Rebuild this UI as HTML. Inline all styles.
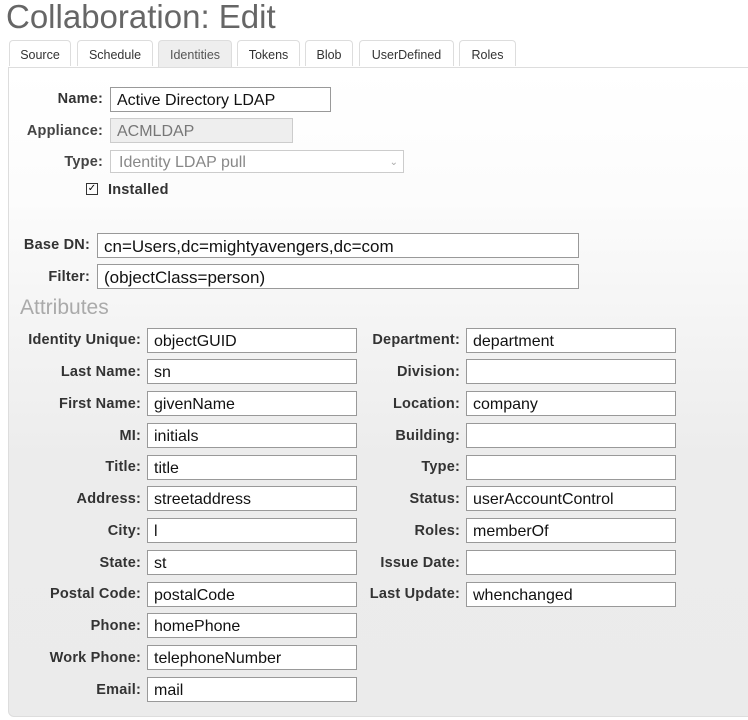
<!DOCTYPE html>
<html><head><style>
body{margin:0;width:748px;height:720px;background:#fff;position:relative;overflow:hidden;font-family:"Liberation Sans",Arial,sans-serif}
.t{position:absolute;left:6px;top:-2px;font-size:33px;color:#666}
.tab{position:absolute;top:40px;height:26px;border:1px solid #ddd;border-bottom:none;border-radius:4px 4px 0 0;background:#fff;font-size:12.5px;color:#333;text-align:center;line-height:28px;box-sizing:border-box}
.panel{position:absolute;left:8px;top:67px;width:750px;height:650px;border:1px solid #ddd;border-radius:0 0 0 6px;background:linear-gradient(#fff 0%,#fcfcfc 20%,#ececec 60%,#ebebeb 100%);box-sizing:border-box}
.l{position:absolute;font-weight:bold;font-size:14.5px;color:#333;text-align:right;letter-spacing:0.2px}
.i{position:absolute;height:25px;background:#fff;border:1px solid #999;box-sizing:border-box;font-size:16px;color:#111;padding-left:6px;line-height:25px;white-space:nowrap}
.h{position:absolute;left:20px;top:296px;font-size:21px;color:#aaa}
</style></head><body>
<div class="t">Collaboration: Edit</div>
<div class="panel"></div>
<div class="tab" style="left:9px;width:62px">Source</div>
<div class="tab" style="left:77px;width:76px">Schedule</div>
<div class="tab" style="left:158px;width:74px;background:#eee;color:#555;height:27px">Identities</div>
<div class="tab" style="left:237px;width:63px">Tokens</div>
<div class="tab" style="left:305px;width:48px">Blob</div>
<div class="tab" style="left:359px;width:95px">UserDefined</div>
<div class="tab" style="left:459px;width:57px">Roles</div>

<div class="l" style="left:0;width:103px;top:91px">Name:</div>
<div class="i" style="left:110px;top:87px;width:221px">Active Directory LDAP</div>
<div class="l" style="left:0;width:103px;top:123px;color:#444">Appliance:</div>
<div class="i" style="left:110px;top:118px;width:183px;background:#eee;border-color:#ccc;color:#777">ACMLDAP</div>
<div class="l" style="left:0;width:103px;top:154px;color:#444">Type:</div>
<div class="i" style="left:110px;top:150px;width:294px;height:23px;border-color:#ccc;color:#888;line-height:23px;padding-left:8px">Identity LDAP pull<span style="position:absolute;right:5px;top:0;font-size:10px;color:#aaa">&#8964;</span></div>
<div style="position:absolute;left:86px;top:183px;width:12px;height:12px;border:1px solid #333;box-sizing:border-box;font-size:10px;line-height:10px;text-align:center">&#10003;</div>
<div class="l" style="left:108px;top:182px;text-align:left">Installed</div>

<div class="l" style="left:0;width:90px;top:237px">Base DN:</div>
<div class="i" style="left:97px;top:233px;width:482px;font-size:17px">cn=Users,dc=mightyavengers,dc=com</div>
<div class="l" style="left:0;width:90px;top:269px">Filter:</div>
<div class="i" style="left:97px;top:264px;width:482px;font-size:17px">(objectClass=person)</div>
<div class="h">Attributes</div>

<div class="l" style="left:0;width:141px;top:332px">Identity Unique:</div><div class="i" style="left:147px;top:328px;width:210px">objectGUID</div>
<div class="l" style="left:0;width:141px;top:364px">Last Name:</div><div class="i" style="left:147px;top:359px;width:210px">sn</div>
<div class="l" style="left:0;width:141px;top:396px">First Name:</div><div class="i" style="left:147px;top:391px;width:210px">givenName</div>
<div class="l" style="left:0;width:141px;top:428px">MI:</div><div class="i" style="left:147px;top:423px;width:210px">initials</div>
<div class="l" style="left:0;width:141px;top:459px">Title:</div><div class="i" style="left:147px;top:455px;width:210px">title</div>
<div class="l" style="left:0;width:141px;top:491px">Address:</div><div class="i" style="left:147px;top:486px;width:210px">streetaddress</div>
<div class="l" style="left:0;width:141px;top:523px">City:</div><div class="i" style="left:147px;top:518px;width:210px">l</div>
<div class="l" style="left:0;width:141px;top:555px">State:</div><div class="i" style="left:147px;top:550px;width:210px">st</div>
<div class="l" style="left:0;width:141px;top:586px">Postal Code:</div><div class="i" style="left:147px;top:582px;width:210px">postalCode</div>
<div class="l" style="left:0;width:141px;top:618px">Phone:</div><div class="i" style="left:147px;top:613px;width:210px">homePhone</div>
<div class="l" style="left:0;width:141px;top:650px">Work Phone:</div><div class="i" style="left:147px;top:645px;width:210px">telephoneNumber</div>
<div class="l" style="left:0;width:141px;top:682px">Email:</div><div class="i" style="left:147px;top:677px;width:210px">mail</div>

<div class="l" style="left:300px;width:160px;top:332px">Department:</div><div class="i" style="left:466px;top:328px;width:210px">department</div>
<div class="l" style="left:300px;width:160px;top:364px">Division:</div><div class="i" style="left:466px;top:359px;width:210px"></div>
<div class="l" style="left:300px;width:160px;top:396px">Location:</div><div class="i" style="left:466px;top:391px;width:210px">company</div>
<div class="l" style="left:300px;width:160px;top:428px">Building:</div><div class="i" style="left:466px;top:423px;width:210px"></div>
<div class="l" style="left:300px;width:160px;top:459px">Type:</div><div class="i" style="left:466px;top:455px;width:210px"></div>
<div class="l" style="left:300px;width:160px;top:491px">Status:</div><div class="i" style="left:466px;top:486px;width:210px">userAccountControl</div>
<div class="l" style="left:300px;width:160px;top:523px">Roles:</div><div class="i" style="left:466px;top:518px;width:210px">memberOf</div>
<div class="l" style="left:300px;width:160px;top:555px">Issue Date:</div><div class="i" style="left:466px;top:550px;width:210px"></div>
<div class="l" style="left:300px;width:160px;top:586px">Last Update:</div><div class="i" style="left:466px;top:582px;width:210px">whenchanged</div>
</body></html>
